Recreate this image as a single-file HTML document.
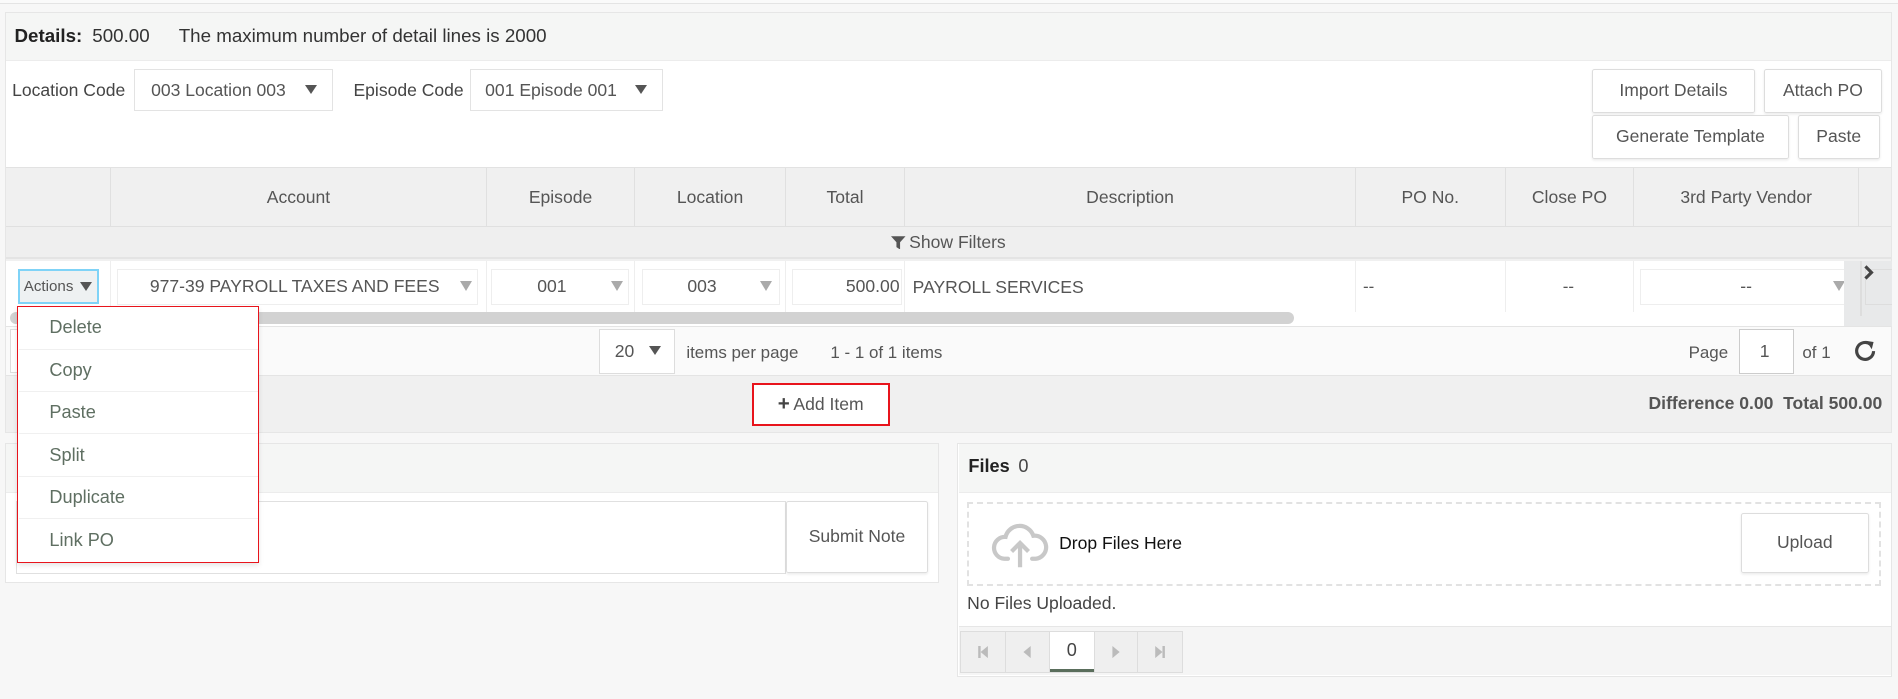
<!DOCTYPE html>
<html><head><meta charset="utf-8"><style>
*{box-sizing:border-box;margin:0;padding:0}
html,body{width:1898px;height:699px;overflow:hidden;background:#f7f7f7}
#w{position:relative;width:1568px;height:577px;zoom:1.21046;font-family:"Liberation Sans",sans-serif;font-size:14px;color:#555}
.a{position:absolute}
.btn{position:absolute;background:#fff;border:1px solid #ddd;border-radius:2px;box-shadow:0 1px 2px rgba(0,0,0,.08);display:flex;align-items:center;justify-content:center;color:#555;font-size:14.5px}
.sel{position:absolute;background:#fff;border:1px solid #e3e3e3;display:flex;align-items:center;font-size:14.5px;color:#555}
.tri{position:absolute;width:0;height:0;border-left:5px solid transparent;border-right:5px solid transparent;border-top:8px solid #555}
.tri.g{border-top-color:#aaa;border-left-width:5px;border-right-width:5px;border-top-width:9px}
.th{position:absolute;top:139px;height:48px;display:flex;align-items:center;justify-content:center;border-right:1px solid #e0e0e0;font-size:14.5px;color:#555}
.cd{position:absolute;top:216px;height:42px;border-right:1px solid #eee}
.mi{position:absolute;left:1px;width:197px;height:35px;border-bottom:1px solid #f0f0f0;padding-left:25px;display:flex;align-items:center;color:#5f6f62;font-size:15px}
.pg{width:37px;display:flex;align-items:center;justify-content:center}
</style></head><body><div id="w">
<div class="a" style="left:0;top:0;width:1568px;height:3px;border-bottom:1px solid #e4e4e4;background:#fafafa"></div>
<div class="a" style="left:4px;top:10px;width:1559px;height:348px;background:#fff;border:1px solid #e6e6e6"></div>
<div class="a" style="left:5px;top:11px;width:1557px;height:39px;background:#f5f6f5;border-bottom:1px solid #ececec"></div>
<div class="a" style="left:12px;top:21px;font-size:15.5px;color:#333"><b style="color:#222">Details:</b> <span style="margin-left:4px">500.00</span><span style="margin-left:24px">The maximum number of detail lines is 2000</span></div>
<div class="a" style="left:10px;top:66px;font-size:14.5px;color:#444">Location Code</div>
<div class="sel" style="left:111px;top:57px;width:164px;height:35px;padding-left:13px">003 Location 003</div><div class="tri" style="left:252px;top:70px"></div>
<div class="a" style="left:292px;top:66px;font-size:14.5px;color:#444">Episode Code</div>
<div class="sel" style="left:388px;top:57px;width:160px;height:35px;padding-left:12px">001 Episode 001</div><div class="tri" style="left:525px;top:70px"></div>
<div class="btn" style="left:1315px;top:57px;width:135px;height:36px">Import Details</div>
<div class="btn" style="left:1457px;top:57px;width:98px;height:36px">Attach PO</div>
<div class="btn" style="left:1315px;top:95px;width:163px;height:36px">Generate Template</div>
<div class="btn" style="left:1485px;top:95px;width:68px;height:36px">Paste</div>
<div class="a" style="left:5px;top:138px;width:1557px;height:78px;background:#f0f0f0;border-top:1px solid #e2e2e2"></div>
<div class="th" style="left:5px;width:87px"></div>
<div class="th" style="left:92px;width:310px">Account</div>
<div class="th" style="left:402px;width:123px">Episode</div>
<div class="th" style="left:525px;width:124px">Location</div>
<div class="th" style="left:649px;width:99px">Total</div>
<div class="th" style="left:748px;width:372px">Description</div>
<div class="th" style="left:1120px;width:124px">PO No.</div>
<div class="th" style="left:1244px;width:106px">Close PO</div>
<div class="th" style="left:1350px;width:186px">3rd Party Vendor</div>
<div class="a" style="left:5px;top:187px;width:1557px;height:27px;background:#efefef;border-top:1px solid #e0e0e0;border-bottom:2px solid #e4e4e4;display:flex;align-items:center;justify-content:center;font-size:14.5px"><svg width="12" height="12" viewBox="0 0 12 12" style="margin-right:3px"><path d="M0 1H12L7.5 6V12L4.5 10V6Z" fill="#555"/></svg>Show Filters</div>
<div class="a" style="left:5px;top:216px;width:1518px;height:53px;background:#fff"></div>
<div class="cd" style="left:5px;width:87px"></div><div class="cd" style="left:92px;width:310px"></div><div class="cd" style="left:402px;width:123px"></div><div class="cd" style="left:525px;width:124px"></div><div class="cd" style="left:649px;width:99px"></div><div class="cd" style="left:748px;width:372px"></div><div class="cd" style="left:1120px;width:124px"></div><div class="cd" style="left:1244px;width:106px"></div>
<div class="a" style="left:15px;top:222px;width:67px;height:29px;border:2px solid #7fd3f7;background:#eef1f2;font-size:12.5px;display:flex;align-items:center;padding-left:3px;color:#555">Actions</div><div class="tri" style="left:66px;top:233px"></div>
<div class="sel" style="left:97px;top:222px;width:298px;height:30px;padding-left:26px;border-color:#eee">977-39 PAYROLL TAXES AND FEES</div><div class="tri g" style="left:380px;top:232px"></div>
<div class="sel" style="left:406px;top:222px;width:114px;height:30px;padding-left:37px;border-color:#eee">001</div><div class="tri g" style="left:505px;top:232px"></div>
<div class="sel" style="left:530px;top:222px;width:114px;height:30px;padding-left:37px;border-color:#eee">003</div><div class="tri g" style="left:628px;top:232px"></div>
<div class="sel" style="left:654px;top:222px;width:91px;height:30px;justify-content:flex-end;padding-right:1px;border-color:#eee">500.00</div>
<div class="a" style="left:754px;top:229px;font-size:14.5px">PAYROLL SERVICES</div>
<div class="a" style="left:1126px;top:229px">--</div>
<div class="a" style="left:1291px;top:229px">--</div>
<div class="sel" style="left:1355px;top:222px;width:175px;height:30px;justify-content:center;border-color:#eee">--</div><div class="tri g" style="left:1514px;top:232px"></div>
<div class="a" style="left:1523px;top:216px;width:40px;height:53px;background:#e8e9ea"></div>
<div class="a" style="left:1537px;top:216px;width:1px;height:45px;background:#ddd"></div>
<div class="a" style="left:1541px;top:222px;width:22px;height:30px;border:1px solid #ddd;border-right:0"></div>
<svg class="a" style="left:1539px;top:218px" width="10" height="14" viewBox="0 0 10 14"><path d="M2 2L7 7L2 12" fill="none" stroke="#444" stroke-width="2.6"/></svg>
<div class="a" style="left:8px;top:258px;width:1061px;height:10px;border-radius:5px;background:#d2d2d2"></div>
<div class="a" style="left:5px;top:269px;width:1557px;height:42px;background:#fafafa;border-top:1px solid #e4e4e4;border-bottom:1px solid #e4e4e4"></div>
<div class="a" style="left:8px;top:272px;width:10px;height:36px;border:1px solid #ddd;background:#fff"></div>
<div class="sel" style="left:495px;top:272px;width:63px;height:37px;padding-left:12px;border-color:#ddd">20</div><div class="tri" style="left:536px;top:286px"></div>
<div class="a" style="left:567px;top:283px">items per page</div>
<div class="a" style="left:686px;top:283px">1 - 1 of 1 items</div>
<div class="a" style="left:1395px;top:283px">Page</div>
<div class="sel" style="left:1437px;top:272px;width:45px;height:37px;padding-left:16px;border-color:#ccc">1</div>
<div class="a" style="left:1489px;top:283px">of 1</div>
<svg class="a" style="left:1531px;top:280px" width="20" height="20" viewBox="0 0 20 20"><path d="M14.5 4.5A7 7 0 1 0 17 10" fill="none" stroke="#444" stroke-width="2.6"/><path d="M11 1.5L17 2.5L15.5 8.5Z" fill="#444"/></svg>
<div class="a" style="left:5px;top:311px;width:1557px;height:46px;background:#f0f0f0"></div>
<div class="a" style="left:621px;top:316px;width:114px;height:36px;border:2px solid #e8141c;background:#fff;display:flex;align-items:center;justify-content:center;font-size:14.5px"><b style="font-size:17px;margin-right:3px;color:#444">+</b>Add Item</div>
<div class="a" style="right:13px;top:325px;font-weight:bold;font-size:14.5px;color:#555">Difference 0.00&nbsp; Total 500.00</div>
<div class="a" style="left:4px;top:366px;width:772px;height:116px;background:#fff;border:1px solid #e6e6e6"></div>
<div class="a" style="left:5px;top:367px;width:770px;height:40px;background:#f5f6f5;border-bottom:1px solid #ececec"></div>
<div class="a" style="left:14px;top:377px;width:3px;height:18px;background:#7a2a22"></div>
<div class="a" style="left:13px;top:414px;width:636px;height:60px;border:1px solid #e0e0e0;background:#fff"></div>
<div class="btn" style="left:649px;top:414px;width:118px;height:59px">Submit Note</div>
<div class="a" style="left:791px;top:366px;width:772px;height:193px;background:#fff;border:1px solid #e6e6e6"></div>
<div class="a" style="left:792px;top:367px;width:770px;height:40px;background:#f5f6f5;border-bottom:1px solid #ececec"></div>
<div class="a" style="left:800px;top:377px;font-size:15px;color:#222"><b>Files</b> <span style="margin-left:3px;color:#444">0</span></div>
<div class="a" style="left:799px;top:415px;width:755px;height:69px;border:2px dashed #e2e2e2"></div>
<svg class="a" style="left:819px;top:430px" width="48" height="40" viewBox="0 0 48 40"><path d="M14 32H11A9 9 0 0 1 12 14A12 12 0 0 1 35 13A9.5 9.5 0 0 1 37 32H34" fill="none" stroke="#c8c8c8" stroke-width="3.5" stroke-linecap="round"/><path d="M24 39V20M17 26L24 19L31 26" fill="none" stroke="#c8c8c8" stroke-width="3.5"/></svg>
<div class="a" style="left:875px;top:440px;font-size:14.5px;color:#111">Drop Files Here</div>
<div class="btn" style="left:1438px;top:424px;width:106px;height:49px">Upload</div>
<div class="a" style="left:799px;top:490px;font-size:14.5px;color:#444">No Files Uploaded.</div>
<div class="a" style="left:792px;top:517px;width:770px;height:41px;background:#f5f5f5;border-top:1px solid #e6e6e6"></div>
<div class="a" style="left:793px;top:521px;width:184px;height:35px;border:1px solid #ddd;background:#efefef;display:flex">
<div class="pg" style="border-right:1px solid #ddd"><svg width="10" height="10" viewBox="0 0 10 10"><path d="M1 0H3V10H1ZM9 0V10L3 5Z" fill="#bbb"/></svg></div>
<div class="pg" style="border-right:1px solid #ddd"><svg width="10" height="10" viewBox="0 0 10 10"><path d="M8 0V10L2 5Z" fill="#bbb"/></svg></div>
<div class="pg" style="width:36px;background:#fff;color:#444;font-size:15px;border-bottom:3px solid #5a6e5c">0</div>
<div class="pg" style="border-left:1px solid #ddd;border-right:1px solid #ddd"><svg width="10" height="10" viewBox="0 0 10 10"><path d="M2 0V10L8 5Z" fill="#bbb"/></svg></div>
<div class="pg" style="width:36px"><svg width="10" height="10" viewBox="0 0 10 10"><path d="M1 0V10L7 5ZM7 0H9V10H7Z" fill="#bbb"/></svg></div>
</div>
<div class="a" style="left:14px;top:253px;width:200px;height:212px;background:#fff;border:1px solid #e8141c;box-shadow:0 2px 4px rgba(0,0,0,.1)">
<div class="mi" style="top:0">Delete</div><div class="mi" style="top:35px">Copy</div><div class="mi" style="top:70px">Paste</div><div class="mi" style="top:105px">Split</div><div class="mi" style="top:140px">Duplicate</div><div class="mi" style="top:175px;border:0">Link PO</div>
</div>
</div></body></html>
